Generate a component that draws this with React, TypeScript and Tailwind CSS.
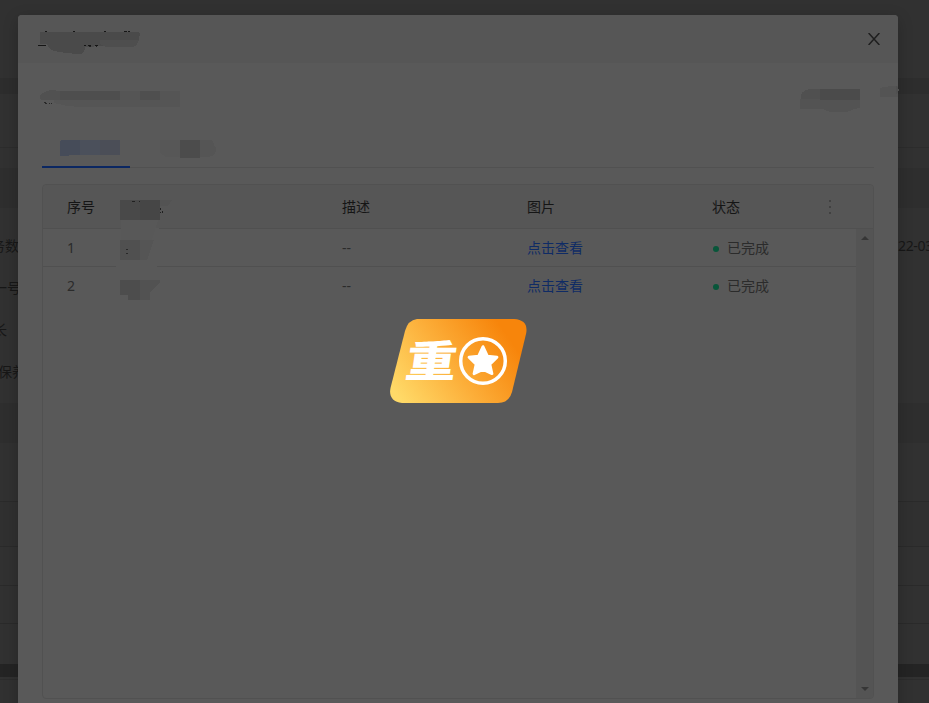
import { ReactNode } from "react";

const rows = [
	{ id: 1, desc: "--", status: "已完成" },
	{ id: 2, desc: "--", status: "已完成" },
];

const grid = "grid grid-cols-[77px_198px_185px_186px_1fr] items-center pl-6";

function Backdrop() {
	return (
		<div className="flex h-full flex-col bg-[#313131] text-sm text-[#171717]">
			<div className="h-[78px]" />
			<div className="h-4 bg-[#2d2d2d]" />
			<div className="h-[54px] border-b border-[#2c2c2c]" />
			<div className="h-5" />
			<div className="h-10 bg-[#2e2e2e]" />
			<div className="flex h-[195px] flex-col pt-[17px]">
				<div className="flex h-[42px] justify-between whitespace-nowrap leading-[42px]">
					<span className="-ml-[9px]">务数</span>
					<span className="-mr-[4px] tracking-[-0.3px]">22-03</span>
				</div>
				<span className="-ml-[7px] h-[42px] leading-[42px]">一号</span>
				<span className="-ml-[7px] h-[42px] leading-[42px]">长</span>
				<span className="-ml-[2px] h-[42px] leading-[42px]">保养</span>
			</div>
			<div className="h-10 bg-[#2e2e2e]" />
			<div className="h-[59px] border-b border-[#2a2a2a]" />
			<div className="h-[45px] border-b border-[#2a2a2a] bg-[#303030]" />
			<div className="h-[39px] border-b border-[#2a2a2a]" />
			<div className="h-[38px] border-b border-[#2a2a2a]" />
			<div className="h-10" />
			<div className="h-[13px] bg-[#242424]" />
			<div className="h-[3px] border-b border-[#2c2c2c]" />
		</div>
	);
}

function CloseIcon() {
	return (
		<svg width="12" height="12" viewBox="0 0 12 12" fill="none" stroke="#1f1f1f" strokeWidth="1.5">
			<path d="M0.6 0L11.4 12M11.4 0L0.6 12" />
		</svg>
	);
}

function TitleSmudge() {
	return (
		<svg className="absolute left-0.5 top-0" width="160" height="48" shapeRendering="crispEdges">
			<path d="M20 17h98q3 0 1 6q-1 8-6 8H83l-18 1q0 7-6 7q-18-1-28-4q-3-3-4-6h-7z" fill="#4a4a4a" />
			<path d="M80 25h39q-2 6-6 7H86l-6-3z" fill="#4e4e4e" />
			<path d="M18 30.5h8M64 30.5h2M68 30.5h3M75 30.5h3M25 16.5h2M53 16.5h2M84 16.5h2M104 16.5h3M108 16.5h2" stroke="#151515" />
			<path d="M69 31.5h2M76 31.5h1" stroke="#202020" />
		</svg>
	);
}

function BodySmudges() {
	return (
		<svg className="absolute left-0 top-0" width="884" height="120" shapeRendering="crispEdges">
			{/* left caption */}
			<path d="M22 34q0-4 8-6q1-1 6-1l4 1h2v9H25q-3 0-3-3" fill="#515151" />
			<path d="M42 28h60v9H42z" fill="#4e4e4e" />
			<path d="M102 28h20v9h-20zM142 28h20v9h-20z" fill="#555" />
			<path d="M122 28h20v9h-20z" fill="#4f4f4f" />
			<path d="M36 37h126v7H60q-13-1-24-4z" fill="#555" />
			<path d="M26 39.5h2M27 40.5h2M31 40.5h1M33 40.5h1" stroke="#292929" />
			{/* right caption */}
			<path d="M785 36h-2v-4q2-6 12-6h7v10z" fill="#505050" />
			<path d="M782 36h60v9l-6 1q-4 3-11 3h-12q-5-1-8-3h-23z" fill="#535353" />
			<path d="M802 26h40v11h-40z" fill="#4b4b4b" />
			<path d="M862 25q7-2 18-2v11h-18z" fill="#545454" />
			<path d="M878 23q3 2 3 4q-1 3-3 4z" fill="#505050" />
			{/* tab labels */}
			<path d="M42 79q0-2 2-2h18v15h-11v1h-9z" fill="#464c59" />
			<path d="M62 77h20v15H62z" fill="#4b505b" />
			<path d="M82 77h20v15H82z" fill="#4b4e57" />
			<path d="M142 77h20v17h-14l-6-4z" fill="#575757" />
			<path d="M162 77h20v18h-20z" fill="#4c4c4c" />
			<path d="M182 77h12q2 2 2 6q3 2 2 5q-2 6-9 6h-7z" fill="#555" />
		</svg>
	);
}

function ColumnSmudges() {
	return (
		<svg className="absolute left-[72px] top-3" width="64" height="108" shapeRendering="crispEdges">
			<path d="M6 31h38l-10 30q10 0 8 10l-1 11l-8 6H6l-5-7V65l5-2z" fill="#595959" />
			<path d="M5 3h20v20H5z" fill="#494949" />
			<path d="M25 3h20v20H25z" fill="#464646" />
			<path d="M45 3h12l-4 6h-8z" fill="#535353" />
			<path d="M6 23h37l-6 20H6z" fill="#585858" />
			<path d="M5 43h20v20H5z" fill="#505050" />
			<path d="M25 43h14l-7 20h-7z" fill="#555" />
			<path d="M5 83h20v20H13v-5H5z" fill="#4d4d4d" />
			<path d="M25 83h20v2l-10 10v8H25z" fill="#525252" />
			<path d="M17 4.5h3M24 4.5h1M45 11.5h1M45 12.5h1M47 14.5h1M45 15.5h1M47 15.5h1" stroke="#202020" />
			<path d="M11 52.5h2M11 56.5h2" stroke="#292929" />
		</svg>
	);
}

function Logo() {
	return (
		<svg className="absolute left-[390px] top-[319px]" width="137" height="84" viewBox="0 0 137 84">
			<defs>
				<linearGradient id="badge" gradientUnits="userSpaceOnUse" x1="12" y1="84" x2="114" y2="12">
					<stop offset="0" stopColor="#ffda68" />
					<stop offset="0.5" stopColor="#fcae39" />
					<stop offset="1" stopColor="#f7850b" />
				</linearGradient>
			</defs>
			<path
				d="M27 0H124Q139 1 136 15L122 73Q119 84 108 84H12Q-2 82 0.5 69L15 12Q18 1 27 0Z"
				fill="url(#badge)"
			/>
			<text
				transform="translate(14 58.4) skewX(-8) scale(1.06 0.9)"
				fontFamily="'Noto Sans CJK SC', sans-serif"
				fontSize="48"
				fontWeight="900"
				fill="#fff"
			>
				重
			</text>
			<circle cx="93" cy="42" r="22.3" fill="none" stroke="#fff" strokeWidth="3.5" />
			<path
				d="M93 27.6L97.4 37.1L107 38.2L99.9 45.2L102 54.7L93 50.4L84 54.7L86.1 45.2L79 38.2L88.6 37.1Z"
				fill="#fff"
				stroke="#fff"
				strokeWidth="2.8"
				strokeLinejoin="round"
			/>
		</svg>
	);
}

function HeadCell({ children }: { children?: ReactNode }) {
	return <span className="text-[#151515]">{children}</span>;
}

export default function App() {
	return (
		<div className="relative h-[703px] w-[929px] overflow-hidden font-['Noto_Sans','Noto_Sans_CJK_SC',sans-serif]">
			<Backdrop />
			<div className="absolute left-[18px] top-[15px] flex h-[700px] w-[880px] flex-col rounded-t bg-[#595959] shadow-[0_4px_16px_rgba(0,0,0,0.2)]">
				<div className="relative flex h-12 shrink-0 items-center justify-end rounded-t bg-[#565656] pr-[18px]">
					<TitleSmudge />
					<CloseIcon />
				</div>
				<div className="relative flex flex-1 flex-col px-6">
					<div className="h-[70px] shrink-0" />
					<div className="flex h-[35px] shrink-0 items-end border-b border-[#515151]">
						<div className="-mb-px h-0.5 w-[88px] bg-[#0b2762]" />
					</div>
					<BodySmudges />
					<div className="relative mt-4 flex h-[515px] w-[832px] flex-col rounded border border-[#515151] text-sm">
						<div className={`${grid} relative h-11 shrink-0 rounded-t border-b border-[#505050] bg-[#565656]`}>
							<HeadCell>序号</HeadCell>
							<HeadCell />
							<HeadCell>描述</HeadCell>
							<HeadCell>图片</HeadCell>
							<div className="-ml-px flex items-center justify-between pr-[42px]">
								<HeadCell>状态</HeadCell>
								<div className="flex flex-col gap-1">
									<i className="size-0.5 bg-[#414141]" />
									<i className="size-0.5 bg-[#414141]" />
									<i className="size-0.5 bg-[#414141]" />
								</div>
							</div>
						</div>
						<div className="flex flex-1">
							<div className="flex-1 text-[#2b2b2b]">
								{rows.map((row) => (
									<div key={row.id} className={`${grid} h-[38px] border-b border-[#505050] last:border-transparent`}>
										<span>{row.id}</span>
										<span />
										<span>{row.desc}</span>
										<span className="text-[#0f2b65]">点击查看</span>
										<span className="flex items-center gap-2">
											<i className="mt-0.5 size-1.5 rounded-full bg-[#08563a]" />
											{row.status}
										</span>
									</div>
								))}
							</div>
							<div className="flex w-[17px] flex-col items-center justify-between rounded-br bg-[#545454] py-[7px]">
								<i className="border-x-4 border-b-4 border-transparent border-b-[#363636]" />
								<i className="border-x-4 border-t-4 border-transparent border-t-[#363636]" />
							</div>
						</div>
						<ColumnSmudges />
					</div>
				</div>
			</div>
			<Logo />
		</div>
	);
}
